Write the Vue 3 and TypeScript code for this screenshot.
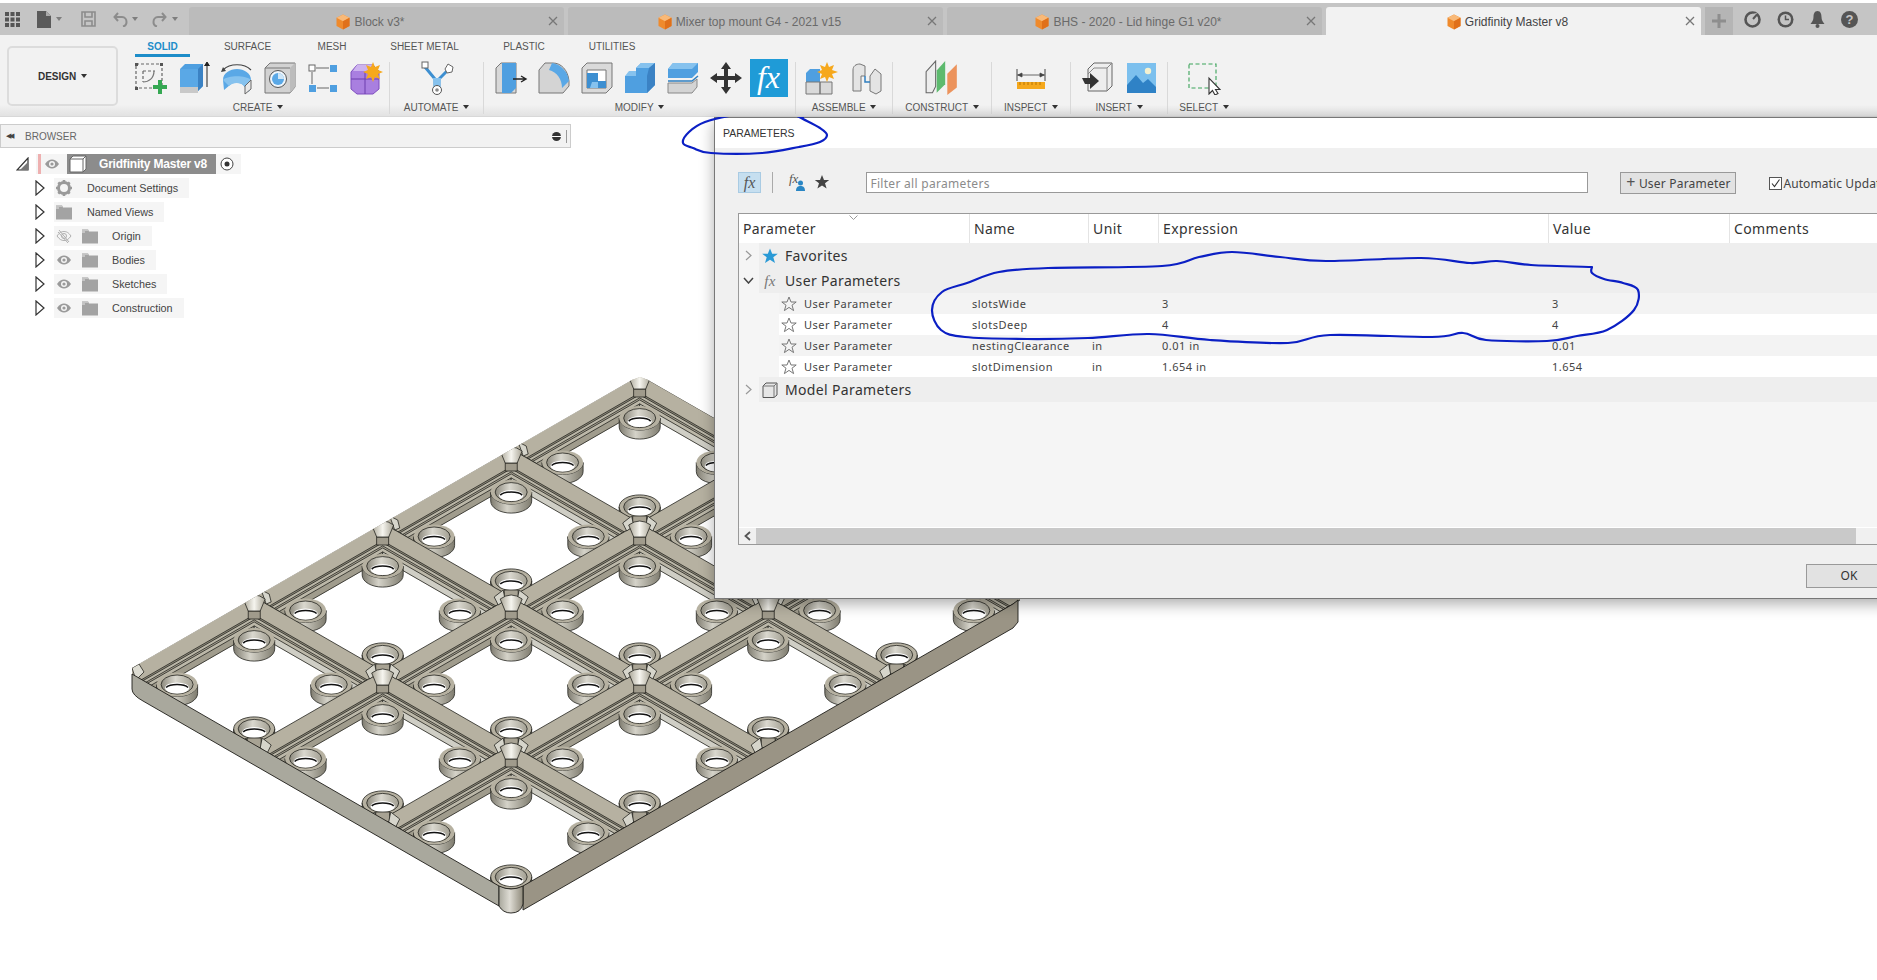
<script setup lang="ts">
import { computed } from "vue";

type Pt = [number, number];

// lattice of the baseplate on screen: 4 cells along u, 3 along v
const origin: Pt = [125.7, 671];
const u: Pt = [128.5, -74];
const v: Pt = [128.5, 74];

const at = (a: number, b: number, dy = 0): Pt => [
  origin[0] + a * u[0] + b * v[0],
  origin[1] + a * u[1] + b * v[1] + dy,
];
const pts = (list: Pt[]) => list.map((p) => `${p[0].toFixed(1)},${p[1].toFixed(1)}`).join(" ");

const bands = [
  { inset: 0.12, fill: "#8f8b7c" },
  { inset: 0.133, fill: "#bab6a7" },
  { inset: 0.155, fill: "#a8a394" },
  { inset: 0.168, fill: "#bcb8a9" },
];

const bossPath = (c: Pt) => {
  const [x, y] = c;
  return `M${x - 20.5},${y} A20.5 12 0 0 0 ${x + 20.5},${y} L${x + 20.5},${y + 9} A20.5 12 0 0 1 ${x - 20.5},${y + 9} Z`;
};
const holeArc = (c: Pt) => {
  const [x, y] = c;
  return `M${x - 11},${y + 3} A12 5 0 0 1 ${x + 11},${y + 3}`;
};

const cells = computed(() => {
  const list: { key: string; order: number; diamond: string; bands: { fill: string; points: string }[]; white: string; wallA: string; wallB: string; bosses: { c: Pt; side: string; arc: string; outline: boolean }[] }[] = [];
  for (let i = 0; i < 4; i++) {
    for (let j = 0; j < 3; j++) {
      const rim = (dy: number) => ({
        a: at(i, j + 0.195, dy),
        b: at(i + 0.805, j + 0.195, dy),
        c: at(i + 0.805, j + 1, dy),
        d: at(i, j + 1, dy),
      });
      const top = rim(0);
      const low = rim(7);
      const bosses = [
        [0.8, 0.2],
        [0.2, 0.2],
        [0.8, 0.8],
        [0.2, 0.8],
      ].map(([s, t], n) => {
        const c = at(i + s, j + t, 13.5);
        // only the boss standing in the opening shows its far outline
        return { c, side: bossPath(c), arc: holeArc(c), outline: n === 3 };
      });
      list.push({
        key: `${i}-${j}`,
        order: j - i,
        diamond: pts([at(i, j), at(i + 1, j), at(i + 1, j + 1), at(i, j + 1)]),
        bands: bands.map((b) => ({
          fill: b.fill,
          points: pts([at(i, j + b.inset), at(i + 1 - b.inset, j + b.inset), at(i + 1 - b.inset, j + 1), at(i, j + 1)]),
        })),
        white: pts([low.a, low.b, low.c, low.d]),
        wallA: pts([top.a, top.b, low.b, low.a]),
        wallB: pts([top.b, top.c, low.c, low.b]),
        bosses,
      });
    }
  }
  return list.sort((p, q) => p.order - q.order);
});

const cones = computed(() => {
  const list: { key: string; path: string; x: number; y: number }[] = [];
  for (let a = 1; a <= 4; a++) {
    for (let b = 0; b < 3; b++) {
      const [x, y] = at(a, b);
      list.push({
        key: `${a}-${b}`,
        path: `M${x - 11},${y + 2} Q${x},${y - 6} ${x + 11},${y + 2} L${x + 6},${y + 14} L${x - 6},${y + 14} Z`,
        x,
        y,
      });
    }
  }
  return list;
});

const chips = computed(() => {
  const list: { key: string; left: string; right: string; box: string }[] = [];
  for (let a = 0; a < 4; a++) {
    for (let b = 1; b <= 3; b++) {
      if (a === 0 && b === 3) continue;
      const [x, y] = at(a, b);
      list.push({
        key: `${a}-${b}`,
        left: pts([[x - 17, y], [x - 8, y - 7], [x - 6, y + 3], [x - 13, y + 8]]),
        right: pts([[x + 17, y], [x + 8, y - 7], [x + 6, y + 3], [x + 13, y + 8]]),
        box: pts([[x - 7, y - 7], [x + 7, y - 7], [x + 7, y + 3], [x - 7, y + 3]]),
      });
    }
  }
  return list;
});

const edgeChips = computed(() =>
  [1, 2, 3].map((a) => {
    const [x, y] = at(a, 0);
    return pts([[x + 7, y - 7], [x + 15, y - 3], [x + 17, y + 5], [x + 12, y + 7]]);
  }),
);

// pen strokes over the screenshot
const smooth = (p: Pt[]) => {
  let d = `M${p[0][0]},${p[0][1]}`;
  for (let i = 0; i < p.length - 1; i++) {
    const p0 = p[Math.max(i - 1, 0)];
    const p1 = p[i];
    const p2 = p[i + 1];
    const p3 = p[Math.min(i + 2, p.length - 1)];
    const c1: Pt = [p1[0] + (p2[0] - p0[0]) / 6, p1[1] + (p2[1] - p0[1]) / 6];
    const c2: Pt = [p2[0] - (p3[0] - p1[0]) / 6, p2[1] - (p3[1] - p1[1]) / 6];
    d += ` C${c1[0].toFixed(1)},${c1[1].toFixed(1)} ${c2[0].toFixed(1)},${c2[1].toFixed(1)} ${p2[0]},${p2[1]}`;
  }
  return d;
};

const titleLoop = smooth([
  [803, 117], [783, 113], [762, 112], [734, 115], [705, 122], [689, 132], [683, 143], [693, 148],
  [711, 153], [762, 153], [799, 147], [820, 142], [827, 135], [820, 128], [803, 119], [795, 115],
]);
const paramLoop = smooth([
  [1592, 267], [1531, 265], [1497, 261], [1470, 263], [1421, 258], [1326, 261], [1280, 257], [1232, 252],
  [1199, 257], [1162, 266], [1048, 268], [999, 272], [967, 283], [942, 292], [932, 310], [941, 330],
  [965, 337], [1027, 339], [1088, 338], [1149, 334], [1210, 340], [1288, 343], [1330, 335], [1432, 337],
  [1463, 333], [1486, 340], [1547, 341], [1577, 336], [1607, 330], [1634, 310], [1638, 290], [1623, 283],
  [1604, 279], [1592, 273], [1592, 267],
]);

const tabs = [
  { title: "Block v3*", active: false },
  { title: "Mixer top mount G4 - 2021 v15", active: false },
  { title: "BHS - 2020 - Lid hinge G1 v20*", active: false },
  { title: "Gridfinity Master v8", active: true },
];
const ribbonTabs = ["SOLID", "SURFACE", "MESH", "SHEET METAL", "PLASTIC", "UTILITIES"];

const treeRows = [
  { label: "Document Settings", icon: "gear", eye: "" },
  { label: "Named Views", icon: "folder", eye: "" },
  { label: "Origin", icon: "folder", eye: "off" },
  { label: "Bodies", icon: "folder", eye: "on" },
  { label: "Sketches", icon: "folder", eye: "on" },
  { label: "Construction", icon: "folder", eye: "on" },
];

const columns = ["Parameter", "Name", "Unit", "Expression", "Value", "Comments"];
const userParams = [
  { name: "slotsWide", unit: "", expr: "3", value: "3" },
  { name: "slotsDeep", unit: "", expr: "4", value: "4" },
  { name: "nestingClearance", unit: "in", expr: "0.01 in", value: "0.01" },
  { name: "slotDimension", unit: "in", expr: "1.654 in", value: "1.654" },
];
</script>

<template>
  <div class="app">
    <svg class="defs" width="0" height="0">
      <defs>
        <symbol id="cube" viewBox="0 0 14 16">
          <path d="M7 0.5 13.5 3.8V12L7 15.5 0.5 12V3.8Z" fill="#ef8a2c" />
          <path d="M7 0.5 13.5 3.8 7 7.2 0.5 3.8Z" fill="#f9b978" />
          <path d="M7 7.2 13.5 3.8V12L7 15.5Z" fill="#e0701a" />
        </symbol>
        <symbol id="eye" viewBox="0 0 16 16">
          <path d="M1 8C3.5 4.5 5.5 3.5 8 3.5S12.5 4.5 15 8C12.5 11.5 10.5 12.5 8 12.5S3.5 11.5 1 8Z" fill="#9a9a9a" />
          <circle cx="8" cy="8" r="3" fill="#f5f5f5" />
          <circle cx="8" cy="8" r="1.6" fill="#9a9a9a" />
        </symbol>
        <symbol id="folder" viewBox="0 0 16 16">
          <path d="M0 1.5H6L7 3.5H16V15.5H0Z" fill="#a3a3a3" />
          <path d="M0 1.5H6L7 3H3V5H0Z" fill="#c4c4c4" />
        </symbol>
        <symbol id="toggle" viewBox="0 0 10 16">
          <path d="M1 1 9 8 1 15Z" fill="none" stroke="#333" stroke-width="1.2" />
        </symbol>
        <symbol id="star" viewBox="0 0 16 16">
          <path d="M8 1 10 6H15.2L11 9.2 12.6 14.6 8 11.4 3.4 14.6 5 9.2 0.8 6H6Z" fill="none" stroke="#777" stroke-width="1" />
        </symbol>
      </defs>
    </svg>

    <header class="titlebar">
      <div class="quick">
        <svg class="apps" width="15" height="15" viewBox="0 0 15 15" fill="#555">
          <rect x="0" y="0" width="4" height="4" /><rect x="5.5" y="0" width="4" height="4" /><rect x="11" y="0" width="4" height="4" />
          <rect x="0" y="5.5" width="4" height="4" /><rect x="5.5" y="5.5" width="4" height="4" /><rect x="11" y="5.5" width="4" height="4" />
          <rect x="0" y="11" width="4" height="4" /><rect x="5.5" y="11" width="4" height="4" /><rect x="11" y="11" width="4" height="4" />
        </svg>
        <svg class="file" width="14" height="17" viewBox="0 0 14 17"><path d="M0 0H9L14 5V17H0Z" fill="#5a5a5a" /><path d="M9 0 14 5H9Z" fill="#aaa" /></svg>
        <span class="caret file-caret"></span>
        <svg class="save" width="15" height="16" viewBox="0 0 15 16" fill="none" stroke="#8c8c8c" stroke-width="1.6"><path d="M1 1H14V15H1Z" /><path d="M4 1V6H11V1M4 15V10H11V15" /></svg>
        <svg class="undo" width="15" height="15" viewBox="0 0 15 15" fill="none" stroke="#8c8c8c" stroke-width="2"><path d="M5 1 1.5 5 5 9M2 5H9C12 5 13.5 7.5 13.5 10S12 14 10 14.5" /></svg>
        <span class="caret undo-caret"></span>
        <svg class="redo" width="15" height="15" viewBox="0 0 15 15" fill="none" stroke="#8c8c8c" stroke-width="2"><path d="M10 1 13.5 5 10 9M13 5H6C3 5 1.5 7.5 1.5 10S3 14 5 14.5" /></svg>
        <span class="caret redo-caret"></span>
      </div>
      <div class="doc-tabs">
        <div v-for="tab in tabs" :key="tab.title" class="doc-tab" :class="{ active: tab.active }">
          <span class="doc-title">
            <svg width="14" height="16"><use href="#cube" /></svg>
            {{ tab.title }}
          </span>
          <svg class="doc-close" width="10" height="10" viewBox="0 0 10 10" stroke-width="1.3"><path d="M1 1 9 9M9 1 1 9" /></svg>
        </div>
        <div class="doc-add">
          <svg width="14" height="14" viewBox="0 0 14 14" fill="#8e8e8e"><rect x="5.5" y="0" width="3" height="14" /><rect x="0" y="5.5" width="14" height="3" /></svg>
        </div>
      </div>
      <div class="status-icons">
        <svg width="17" height="17" viewBox="0 0 17 17"><circle cx="8.5" cy="8.5" r="7" fill="none" stroke="#555" stroke-width="2.6" /><path d="M8 3 13 2 10 8Z" fill="#c4c4c4" /><path d="M9 8 13 3.5" stroke="#555" stroke-width="2" /></svg>
        <svg width="17" height="17" viewBox="0 0 17 17"><circle cx="8.5" cy="8.5" r="8" fill="#555" /><circle cx="8.5" cy="8.5" r="5.5" fill="#c4c4c4" /><path d="M8.5 4.5V8.5H12" fill="none" stroke="#555" stroke-width="1.5" /></svg>
        <svg width="15" height="17" viewBox="0 0 15 17" fill="#555"><path d="M7.5 0C10.5 0 11.5 3 11.5 6 11.5 9.5 13 11 14.5 13H.5C2 11 3.5 9.5 3.5 6 3.5 3 4.5 0 7.5 0Z" /><circle cx="7.5" cy="15" r="2" /></svg>
        <span class="help">?</span>
      </div>
    </header>

    <section class="ribbon">
      <button class="design-btn">DESIGN <span class="caret dark"></span></button>
      <div class="ribbon-main">
        <nav class="ribbon-tabs">
          <span v-for="(name, i) in ribbonTabs" :key="name" class="ribbon-tab" :class="{ current: i === 0 }">{{ name }}</span>
        </nav>
        <div class="groups">
          <div class="group g-create">
            <div class="tools">
              <svg class="tool" viewBox="0 0 34 34">
                <path d="M2 3H28V27H2Z M9 10H21M9 10V21" fill="none" stroke="#666" stroke-width="1.2" stroke-dasharray="3 2" />
                <path d="M20 10C20 17 15 21 9 21" fill="none" stroke="#777" stroke-width="1.2" />
                <rect x="1" y="2" width="3" height="3" fill="#555" /><rect x="26" y="2" width="3" height="3" fill="#555" /><rect x="1" y="26" width="3" height="3" fill="#555" />
                <path d="M24 19H28V24H33V28H28V33H24V28H19V24H24Z" fill="#35a853" />
              </svg>
              <svg class="tool" viewBox="0 0 34 34">
                <path d="M3 8 8 3H26V25L21 30H3Z" fill="#4f9fe0" />
                <path d="M3 8H21V30H3Z" fill="#5aa8e6" />
                <path d="M21 8 26 3V25L21 30Z" fill="#3b82c4" />
                <path d="M3 26H21V32H3Z" fill="#c9c9c9" />
                <path d="M30 26V2M27.5 5 30 1 32.5 5" fill="#222" stroke="#222" stroke-width="1" />
              </svg>
              <svg class="tool" viewBox="0 0 34 34">
                <path d="M3 19C3 12 10 8 17 8S31 12 31 19L29 31 23 24C20 21 13 21 10 24L4 29Z" fill="#5aa8e6" />
                <path d="M3 19C8 14 26 14 31 19L25 25C20 21 13 21 9 25Z" fill="#86c2ee" />
                <path d="M25 25 31 19V28L25 33Z" fill="#e8e8e8" stroke="#666" />
                <path d="M3 9C10 2 24 2 31 9" fill="none" stroke="#444" stroke-width="1.2" />
                <path d="M1 11 3 6 6 10Z" fill="#444" />
              </svg>
              <svg class="tool" viewBox="0 0 34 34">
                <path d="M2 7 7 2H32V26L27 32H2Z" fill="#d2d2d2" stroke="#777" />
                <path d="M27 7 32 2V26L27 32Z" fill="#bcbcbc" />
                <path d="M2 7H27" stroke="#777" />
                <circle cx="15" cy="18" r="8.5" fill="#eef5fb" stroke="#555" />
                <circle cx="15" cy="18" r="6" fill="#5aa8e6" />
                <path d="M15 18V12A6 6 0 0 1 21 18Z" fill="#cfe6f7" />
              </svg>
              <svg class="tool" viewBox="0 0 34 34">
                <rect x="3" y="4" width="6" height="6" fill="#fff" stroke="#666" />
                <rect x="24" y="4" width="7" height="7" fill="#4f9fe0" />
                <rect x="3" y="24" width="7" height="7" fill="#4f9fe0" />
                <rect x="24" y="24" width="7" height="7" fill="#4f9fe0" />
                <path d="M10 7H23M6 11V23M11 27H23" stroke="#666" />
              </svg>
              <svg class="tool" viewBox="0 0 34 34">
                <path d="M2 11 8 4H24L30 10V28L24 33H8L2 28Z" fill="#a97fe0" stroke="#7f4fbf" />
                <path d="M2 18H30M16 11V33" stroke="#6d3fae" />
                <path d="M8 4H24L18 10H4Z" fill="#cdb3ef" />
                <path d="M24 1 26 6 31 4 29 9 34 11 29 13 31 18 26 16 24 21 22 16 17 18 19 13 14 11 19 9 17 4 22 6Z" fill="#f6a81c" />
              </svg>
            </div>
            <div class="group-label">CREATE <span class="caret dark"></span></div>
          </div>

          <div class="group g-automate">
            <div class="tools">
              <svg class="tool" viewBox="0 0 34 34">
                <path d="M5 6 15 18 15 27M29 8 19 18 19 27" fill="none" stroke="#3d8fd1" stroke-width="3" />
                <path d="M13 17H21L20 27H14Z" fill="#86c2ee" />
                <rect x="2" y="1" width="6" height="6" fill="#fff" stroke="#666" />
                <path d="M28 3 33 6 32 11 27 12 25 8Z" fill="#fff" stroke="#666" />
                <circle cx="17" cy="29" r="4.5" fill="#fff" stroke="#555" />
                <circle cx="17" cy="29" r="1.8" fill="#888" />
              </svg>
            </div>
            <div class="group-label">AUTOMATE <span class="caret dark"></span></div>
          </div>

          <div class="group g-modify">
            <div class="tools">
              <svg class="tool" viewBox="0 0 34 34">
                <path d="M2 7 7 2H22V32H2Z" fill="#d8d8d8" stroke="#777" />
                <path d="M8 2H22V27L17 32H8Z" fill="#4f9fe0" />
                <path d="M19 18H31M27 15 32 18 27 21" fill="none" stroke="#222" stroke-width="1.4" />
              </svg>
              <svg class="tool" viewBox="0 0 34 34">
                <path d="M2 32V9L8 2H16C24 2 31 9 32 20V25L26 32Z" fill="#d4d4d4" stroke="#777" />
                <path d="M15 2C23 3 31 10 32 20L25 27C25 18 20 11 12 9Z" fill="#5aa8e6" />
              </svg>
              <svg class="tool" viewBox="0 0 34 34">
                <path d="M2 7 7 2H32V26L26 32H2Z" fill="#dadada" stroke="#777" />
                <path d="M7 9H26V27H7Z" fill="#fff" stroke="#777" />
                <path d="M7 12H18V20H26V27H7Z" fill="#3d8fd1" />
                <path d="M12 21 18 21 18 27H10Z" fill="#86c2ee" />
              </svg>
              <svg class="tool" viewBox="0 0 34 34">
                <path d="M2 15H13V7L18 2H32V24L24 32H2Z" fill="#4f9fe0" />
                <path d="M13 7H26L32 2H18Z" fill="#86c2ee" />
                <path d="M26 7 32 2V24L24 32V15Z" fill="#3b82c4" />
                <path d="M2 15 6 10H13V15Z" fill="#86c2ee" />
              </svg>
              <svg class="tool" viewBox="0 0 34 34">
                <path d="M2 8 7 2H32V11L26 17H2Z" fill="#4f9fe0" />
                <path d="M2 8 7 2H32L26 8Z" fill="#86c2ee" />
                <path d="M2 20H26L32 15" stroke="#2f7fc0" stroke-width="1.5" fill="none" />
                <path d="M2 22H26L31 18V26L26 32H2Z" fill="#d4d4d4" stroke="#888" />
              </svg>
              <svg class="tool" viewBox="0 0 34 34" fill="#333">
                <path d="M17 1 22 8H19V15H26V12L33 17 26 22V19H19V26H22L17 33 12 26H15V19H8V22L1 17 8 12V15H15V8H12Z" />
              </svg>
              <div class="fx-tile">fx</div>
            </div>
            <div class="group-label">MODIFY <span class="caret dark"></span></div>
          </div>

          <div class="group g-assemble">
            <div class="tools wide">
              <svg class="tool" viewBox="0 0 34 34">
                <path d="M1 12 5 8H15V21H1Z" fill="#4f9fe0" />
                <path d="M1 21H15V33H1ZM15 21H27V33H15Z" fill="#dadada" stroke="#777" />
                <path d="M22 1 24 6 29 4 27 9 33 11 27 13 29 18 24 16 22 21 20 16 15 18 17 13 12 11 17 9 15 4 20 6Z" fill="#f6a81c" />
              </svg>
              <svg class="tool" viewBox="0 0 34 34">
                <path d="M3 30V9C3 5 6 3 10 3L15 5V15H11V30Z" fill="#e4e4e4" stroke="#777" />
                <path d="M20 30V15L25 8 31 13V30L26 33Z" fill="#e4e4e4" stroke="#777" />
                <path d="M15 15V21H20" fill="none" stroke="#2f7fc0" stroke-width="1.5" />
              </svg>
            </div>
            <div class="group-label">ASSEMBLE <span class="caret dark"></span></div>
          </div>

          <div class="group g-construct">
            <div class="tools">
              <svg class="tool large" viewBox="0 0 34 34">
                <path d="M2 31V11L11 1V25L8 31Z" fill="#ededed" stroke="#666" />
                <path d="M12 31V10L20 1V23Z" fill="#5dba6e" />
                <path d="M22 33V13L31 4V26Z" fill="#ec935c" />
              </svg>
            </div>
            <div class="group-label">CONSTRUCT <span class="caret dark"></span></div>
          </div>

          <div class="group g-inspect">
            <div class="tools">
              <svg class="tool" viewBox="0 0 34 34">
                <path d="M3 8V20M31 8V20" stroke="#444" />
                <path d="M3 14H31M4 14 8 12V16ZM30 14 26 12V16Z" fill="#444" stroke="#444" stroke-width=".8" />
                <rect x="3" y="21" width="28" height="7" fill="#f5a81c" />
                <path d="M6 21V24M10 21V24M14 21V24M18 21V24M22 21V24M26 21V24" stroke="#b87400" />
              </svg>
            </div>
            <div class="group-label">INSPECT <span class="caret dark"></span></div>
          </div>

          <div class="group g-insert">
            <div class="tools">
              <svg class="tool" viewBox="0 0 34 34">
                <path d="M7 8 13 2H31V25L26 30H7Z" fill="#eee" stroke="#666" />
                <path d="M26 7H13L7 13M26 7 31 2M26 7V30" fill="none" stroke="#888" />
                <path d="M1 17H9V12L18 20 9 28V23H4Z" fill="#333" />
              </svg>
              <svg class="tool" viewBox="0 0 34 34">
                <rect x="3" y="2" width="29" height="30" fill="#7cc0ee" />
                <circle cx="24" cy="10" r="3.2" fill="#f4f1d0" />
                <path d="M3 32V24L12 14 19 22 24 18 32 26V32Z" fill="#2f82c6" />
              </svg>
            </div>
            <div class="group-label">INSERT <span class="caret dark"></span></div>
          </div>

          <div class="group g-select">
            <div class="tools">
              <svg class="tool" viewBox="0 0 34 34">
                <rect x="2" y="3" width="27" height="24" fill="none" stroke="#3aa35a" stroke-width="1.1" stroke-dasharray="4 2.5" />
                <path d="M22 17V33L25.5 29.5 28 34 31 32.5 28.5 28.5H33Z" fill="#fff" stroke="#333" stroke-width="1.1" />
              </svg>
            </div>
            <div class="group-label">SELECT <span class="caret dark"></span></div>
          </div>
        </div>
      </div>
    </section>

    <main class="workspace">
      <!-- the model sits on a free canvas, page coordinates -->
      <svg class="model" viewBox="0 117 1877 863" width="1877" height="863">
        <defs>
          <linearGradient id="bossSide" x1="0" x2="1" y1="0" y2="0">
            <stop offset="0" stop-color="#7f7c70" />
            <stop offset=".4" stop-color="#d5d3c9" />
            <stop offset="1" stop-color="#7f7c6f" />
          </linearGradient>
          <linearGradient id="cone" x1="0" x2="1" y1="0" y2="0">
            <stop offset="0" stop-color="#a9a596" />
            <stop offset=".5" stop-color="#f6f5ef" />
            <stop offset="1" stop-color="#a9a596" />
          </linearGradient>
          <linearGradient id="corner" x1="0" x2="1" y1="0" y2="0">
            <stop offset="0" stop-color="#a8a79c" />
            <stop offset=".45" stop-color="#dedcd4" />
            <stop offset="1" stop-color="#8f8a7b" />
          </linearGradient>
          <linearGradient id="bore" x1="0" x2="1" y1="0" y2="0">
            <stop offset="0" stop-color="#8d8a7e" />
            <stop offset=".45" stop-color="#dad8cf" />
            <stop offset="1" stop-color="#a3a093" />
          </linearGradient>
          <clipPath id="plateClip">
            <polygon points="132,668 632,380 640,377 648,380 1020,593 1020,630 525,916 500,916 132,700" />
          </clipPath>
        </defs>
        <g clip-path="url(#plateClip)" stroke="#25241f" stroke-width=".8">
          <g v-for="cell in cells" :key="cell.key">
            <polygon :points="cell.diamond" fill="#b6b1a1" />
            <polygon v-for="b in cell.bands" :key="b.fill" :points="b.points" :fill="b.fill" />
            <polygon :points="cell.white" fill="#fff" stroke="none" />
            <polygon :points="cell.wallA" fill="#a09c8d" />
            <polygon :points="cell.wallB" fill="#cfcec5" />
            <g v-for="(boss, n) in cell.bosses" :key="n">
              <path :d="boss.side" fill="url(#bossSide)" />
              <ellipse :cx="boss.c[0]" :cy="boss.c[1]" rx="20.5" ry="12" fill="#b6b1a1" :stroke="boss.outline ? '#25241f' : 'none'" />
              <ellipse :cx="boss.c[0]" :cy="boss.c[1]" rx="16" ry="9.5" fill="url(#bore)" />
              <ellipse :cx="boss.c[0]" :cy="boss.c[1] + 3.5" rx="12" ry="5.5" fill="#fff" stroke="none" />
              <path :d="boss.arc" fill="none" stroke="#111" stroke-width="1.5" />
            </g>
          </g>
          <polygon v-for="(p, n) in edgeChips" :key="n" :points="p" fill="#d6d5cb" />
          <g v-for="c in chips" :key="c.key">
            <polygon :points="c.box" fill="#a8a394" />
            <polygon :points="c.left" fill="#d6d5cb" />
            <polygon :points="c.right" fill="#d6d5cb" />
          </g>
          <g v-for="c in cones" :key="c.key">
            <rect :x="c.x - 6" :y="c.y + 14" width="12" height="8" fill="#a09b8c" />
            <path :d="c.path" fill="url(#cone)" />
          </g>
          <path d="M132,668 L139,664 L144,672 L136,680 Z" fill="#dcdbd1" />
        </g>
        <g stroke="#1e1d19" stroke-width=".9">
          <path d="M132,674 L499,886 V906 L143,701 Q132,695 132,689 Z" fill="#a9a89d" />
          <path d="M523,886 L1013,604 L1018,600 V622 L1013,628 L523,910 Z" fill="#9a9485" />
          <path d="M499,886 Q511,892 523,886 V904 Q521,913 511,913 Q503,913 499,906 Z" fill="url(#corner)" />
        </g>
      </svg>

      <aside class="browser">
        <div class="browser-bar">
          <span class="collapse">◀◀</span>
          <span class="browser-title">BROWSER</span>
          <span class="browser-tools"><i class="minus"></i><i class="grip"></i></span>
        </div>
        <div class="tree-root">
          <svg class="root-toggle" width="13" height="14" viewBox="0 0 13 14"><path d="M12 1V13H1Z" fill="none" stroke="#333" stroke-width="1.2" /><path d="M12 5V13H4Z" fill="#777" /></svg>
          <div class="root-item">
            <i class="red-mark"></i>
            <svg class="eye" width="16" height="16"><use href="#eye" /></svg>
            <div class="root-name">
              <svg width="18" height="18" viewBox="0 0 18 18"><path d="M1 4 4 1H17V14L14 17H1Z" fill="#fff" stroke="#666" /><path d="M14 4H1M14 4 17 1M14 4V17" fill="none" stroke="#666" /></svg>
              <span>Gridfinity Master v8</span>
            </div>
            <svg class="radio" width="14" height="14" viewBox="0 0 14 14"><circle cx="7" cy="7" r="6" fill="#fff" stroke="#444" /><circle cx="7" cy="7" r="2.5" fill="#333" /></svg>
          </div>
        </div>
        <div v-for="row in treeRows" :key="row.label" class="tree-row">
          <svg class="tree-toggle" width="10" height="16"><use href="#toggle" /></svg>
          <div class="tree-item">
            <template v-if="row.eye">
              <svg v-if="row.eye === 'on'" class="eye" width="16" height="16"><use href="#eye" /></svg>
              <svg v-else class="eye" width="16" height="16" viewBox="0 0 16 16" fill="none" stroke="#b0b0b0"><path d="M1 8C3.5 4.5 5.5 3.5 8 3.5S12.5 4.5 15 8C12.5 11.5 10.5 12.5 8 12.5S3.5 11.5 1 8Z" /><circle cx="8" cy="8" r="2.5" /><path d="M3 2 13 14M2 4 12 15" /></svg>
            </template>
            <svg v-if="row.icon === 'gear'" class="node-icon" width="16" height="16" viewBox="0 0 16 16">
              <circle cx="8" cy="8" r="5.5" fill="none" stroke="#9a9a9a" stroke-width="3" />
              <path d="M8 0V3M8 13V16M0 8H3M13 8H16M2.3 2.3 4.4 4.4M11.6 11.6 13.7 13.7M13.7 2.3 11.6 4.4M4.4 11.6 2.3 13.7" stroke="#9a9a9a" stroke-width="2.6" />
            </svg>
            <svg v-else class="node-icon" :class="{ shifted: row.eye }" width="16" height="16"><use href="#folder" /></svg>
            <span class="node-label" :class="{ shifted: row.eye }">{{ row.label }}</span>
          </div>
        </div>
      </aside>

      <section class="dialog">
        <div class="dialog-title">PARAMETERS</div>
        <div class="dialog-toolbar">
          <div class="fx-toggle">fx</div>
          <i class="tool-sep"></i>
          <span class="fx-user">
            <i class="fx-small">fx</i>
            <svg width="9" height="11" viewBox="0 0 9 11" fill="#2a86c4"><circle cx="4.5" cy="3" r="2.5" /><path d="M0 11C0 7 2 6 4.5 6S9 7 9 11Z" /></svg>
          </span>
          <svg class="star-filter" width="16" height="16" viewBox="0 0 16 16" fill="#444"><path d="M8 1 10 6H15.2L11 9.2 12.6 14.6 8 11.4 3.4 14.6 5 9.2 0.8 6H6Z" /></svg>
          <input class="filter" type="text" placeholder="Filter all parameters" />
          <button class="add-param"><span class="plus">+</span> User Parameter</button>
          <label class="auto-update">
            <svg width="13" height="13" viewBox="0 0 13 13"><rect x=".5" y=".5" width="12" height="12" fill="#fff" stroke="#555" /><path d="M3 6.5 5.5 9.5 10.5 2.5" fill="none" stroke="#333" stroke-width="1.1" /></svg>
            <span>Automatic Update</span>
          </label>
        </div>

        <div class="table">
          <div class="table-head">
            <span v-for="name in columns" :key="name" class="head-cell">{{ name }}</span>
            <svg class="sort-mark" width="9" height="5" viewBox="0 0 9 5"><path d="M.5 .5 4.5 4.5 8.5 .5" fill="none" stroke="#999" /></svg>
          </div>
          <div class="table-body">
            <div class="group-row">
              <span class="chevron"><svg width="7" height="11" viewBox="0 0 7 11"><path d="M1 1 6 5.5 1 10" fill="none" stroke="#999" stroke-width="1.2" /></svg></span>
              <svg class="group-icon" width="16" height="16" viewBox="0 0 16 16" fill="#2a9ad6"><path d="M8 .5 10.2 5.8H15.8L11.3 9.3 13 15 8 11.7 3 15 4.7 9.3 .2 5.8H5.8Z" /></svg>
              <span class="group-name">Favorites</span>
            </div>
            <div class="group-row">
              <span class="chevron"><svg width="11" height="7" viewBox="0 0 11 7"><path d="M1 1 5.5 6 10 1" fill="none" stroke="#444" stroke-width="1.5" /></svg></span>
              <i class="group-icon fx-serif">fx</i>
              <span class="group-name">User Parameters</span>
            </div>
            <div v-for="param in userParams" :key="param.name" class="param-row">
              <span class="param-kind"><svg width="16" height="16"><use href="#star" /></svg>User Parameter</span>
              <span class="param-name">{{ param.name }}</span>
              <span class="param-cell">{{ param.unit }}</span>
              <span class="param-cell">{{ param.expr }}</span>
              <span class="param-cell">{{ param.value }}</span>
              <span></span>
            </div>
            <div class="group-row">
              <span class="chevron"><svg width="7" height="11" viewBox="0 0 7 11"><path d="M1 1 6 5.5 1 10" fill="none" stroke="#999" stroke-width="1.2" /></svg></span>
              <svg class="group-icon" width="16" height="16" viewBox="0 0 16 16"><path d="M1 4 4 1H15V13L12 15.5H1Z" fill="#e6e6e6" stroke="#555" /><path d="M12 4H1M12 4 15 1M12 4V15.5" fill="none" stroke="#777" /></svg>
              <span class="group-name">Model Parameters</span>
            </div>
          </div>
          <div class="scrollbar">
            <span class="scroll-arrow"><svg width="7" height="10" viewBox="0 0 7 10"><path d="M6 1 1.5 5 6 9" fill="none" stroke="#555" stroke-width="1.8" /></svg></span>
            <span class="scroll-thumb"></span>
          </div>
        </div>

        <div class="dialog-footer">
          <button class="ok-btn">OK</button>
        </div>
      </section>

      <!-- pen marks drawn over the dialog -->
      <svg class="pen" viewBox="0 117 1877 863" width="1877" height="863">
        <path :d="titleLoop" />
        <path :d="paramLoop" />
      </svg>
    </main>
  </div>
</template>

<style scoped>
.app {
  position: relative;
  width: 1877px;
  height: 980px;
  overflow: hidden;
  background: #fff;
  font-family: "Liberation Sans", Arial, sans-serif;
  display: flex;
  flex-direction: column;
}

.defs {
  position: absolute;
}

/* title bar */
.titlebar {
  height: 32px;
  margin-top: 3px;
  background: #c5c5c5;
  display: flex;
  flex: none;
}

.quick {
  width: 189px;
  flex: none;
  display: flex;
  align-items: center;
  padding-left: 5px;
  box-sizing: border-box;
}

.file {
  margin-left: 17px;
}

.file-caret {
  margin-left: 5px;
}

.save {
  margin-left: 19px;
}

.undo {
  margin-left: 17px;
}

.undo-caret {
  margin-left: 4px;
}

.redo {
  margin-left: 14px;
}

.redo-caret {
  margin-left: 5px;
}

.caret {
  display: inline-block;
  width: 0;
  height: 0;
  border-left: 3.5px solid transparent;
  border-right: 3.5px solid transparent;
  border-top: 4px solid #7e7e7e;
}

.caret.dark {
  border-left-width: 3px;
  border-right-width: 3px;
  border-top: 4px solid #333;
  margin-left: 2px;
  vertical-align: 2px;
}

.doc-tabs {
  display: flex;
  gap: 4px;
  padding-top: 4px;
}

.doc-tab {
  position: relative;
  width: 375px;
  height: 28px;
  padding: 2px 12px 0 0;
  background: #bbb;
  border-radius: 3px 3px 0 0;
  box-sizing: border-box;
  display: flex;
  align-items: center;
  justify-content: center;
  color: #6a6a6a;
  font-size: 12px;
}

.doc-tab.active {
  background: #f2f2f2;
  color: #444;
}

.doc-title {
  display: flex;
  align-items: center;
  gap: 4px;
}

.doc-close {
  position: absolute;
  right: 6px;
  top: 9px;
  stroke: #777;
}

.doc-add {
  width: 28px;
  height: 28px;
  background: #b5b5b5;
  display: flex;
  align-items: center;
  justify-content: center;
}

.status-icons {
  display: flex;
  align-items: center;
  gap: 16px;
  margin-left: 11px;
}

.help {
  width: 17px;
  height: 17px;
  border-radius: 50%;
  background: #555;
  color: #c5c5c5;
  font-size: 13px;
  font-weight: 700;
  line-height: 17px;
  text-align: center;
}

/* ribbon */
.ribbon {
  height: 82px;
  flex: none;
  display: flex;
  background: linear-gradient(#f2f2f2 86%, #e2e2e2 100%);
  border-bottom: 1px solid #d8d8d8;
  box-sizing: border-box;
}

.design-btn {
  width: 111px;
  height: 60px;
  margin: 11px 0 0 7px;
  padding: 0;
  background: #f2f2f2;
  border: 2px solid #dcdcdc;
  border-radius: 5px;
  color: #333;
  font: 700 10px "Liberation Sans", Arial, sans-serif;
  flex: none;
}

.ribbon-main {
  margin-left: 9px;
}

.ribbon-tabs {
  display: grid;
  grid-template-columns: 55px 115px 54px 131px 68px 108px;
  margin-left: 8px;
  height: 25px;
  padding-top: 6px;
  box-sizing: border-box;
}

.ribbon-tab {
  height: 17px;
  text-align: center;
  font-size: 10px;
  line-height: 12px;
  color: #555;
  white-space: nowrap;
}

.ribbon-tab.current {
  color: #1d8dc9;
  font-weight: 700;
  border-bottom: 3px solid #1d8dc9;
  box-sizing: content-box;
  height: 13px;
}

.groups {
  display: flex;
  height: 52px;
  margin-top: 2px;
}

.group {
  border-right: 1px solid #d9d9d9;
  box-sizing: border-box;
  display: flex;
  flex-direction: column;
  align-items: center;
}

.g-create {
  width: 263px;
}

.g-automate {
  width: 94px;
}

.g-modify {
  width: 312px;
}

.g-assemble {
  width: 97px;
}

.g-construct {
  width: 99px;
}

.g-inspect {
  width: 79px;
}

.g-insert {
  width: 97px;
}

.g-select {
  width: 72px;
  border-right: 0;
}

.tools {
  display: flex;
  flex: none;
  height: 38px;
  align-items: center;
  gap: 9px;
  margin-top: -3px;
}

.tools.wide {
  gap: 11px;
}

.tool {
  width: 34px;
  height: 34px;
  flex: none;
}

.tool.large {
  width: 36px;
  height: 36px;
}

.fx-tile {
  width: 38px;
  height: 38px;
  margin-left: -2px;
  margin-right: -2px;
  background: #1f9bd7;
  color: #fff;
  font: italic 32px/36px "Liberation Serif", serif;
  text-align: center;
}

.group-label {
  margin-top: 4px;
  font-size: 10px;
  line-height: 13px;
  color: #555;
  white-space: nowrap;
}

/* workspace */
.workspace {
  position: relative;
  flex: 1;
}

.model,
.pen {
  position: absolute;
  left: 0;
  top: 0;
}

.pen {
  pointer-events: none;
}

.pen path {
  fill: none;
  stroke: #0b1fc4;
  stroke-width: 2.2;
  stroke-linecap: round;
}

/* browser panel */
.browser {
  position: relative;
  width: 571px;
  padding-top: 7px;
}

.browser-bar {
  height: 24px;
  background: #f2f2f2;
  border: 1px solid #ccc;
  box-sizing: border-box;
  display: flex;
  align-items: center;
  font-size: 10px;
  color: #666;
}

.collapse {
  font-size: 7px;
  letter-spacing: -2px;
  color: #444;
  margin-left: 5px;
  width: 19px;
}

.browser-title {
  flex: 1;
}

.browser-tools {
  display: flex;
  align-items: center;
  gap: 5px;
  margin-right: 1px;
}

.minus {
  width: 9px;
  height: 9px;
  border-radius: 50%;
  background: linear-gradient(#333 40%, #fff 40%, #fff 60%, #333 60%);
}

.grip {
  width: 2px;
  height: 13px;
  border-left: 1px solid #999;
}

.tree-root {
  display: flex;
  align-items: center;
  height: 20px;
  margin: 6px 0 2px;
  padding-left: 16px;
}

.root-toggle {
  margin-right: 7px;
  flex: none;
}

.root-item {
  width: 205px;
  height: 20px;
  background: #f5f5f5;
  display: flex;
  align-items: center;
}

.red-mark {
  width: 3px;
  height: 20px;
  margin-left: 2px;
  background: #eeb0b0;
}

.eye {
  flex: none;
}

.root-item .eye {
  margin-left: 3px;
}

.root-name {
  width: 149px;
  height: 20px;
  margin-left: 7px;
  background: #8c8c8c;
  color: #fff;
  font-size: 12px;
  display: flex;
  align-items: center;
}

.root-name svg {
  margin-left: 2px;
  flex: none;
}

.root-name span {
  margin-left: 12px;
  font-weight: 600;
  letter-spacing: -.2px;
}

.radio {
  margin-left: 4px;
}

.tree-row {
  display: flex;
  align-items: center;
  height: 24px;
  padding-left: 35px;
}

.tree-toggle {
  flex: none;
  margin-right: 9px;
}

.tree-item {
  height: 20px;
  padding: 0 11px 0 2px;
  background: #f5f5f5;
  display: flex;
  align-items: center;
  font-size: 10.8px;
  color: #444;
}

.node-icon {
  flex: none;
}

.node-icon.shifted {
  margin-left: 10px;
}

.node-label {
  margin-left: 15px;
}

.node-label.shifted {
  margin-left: 14px;
}

/* parameters dialog */
.dialog {
  position: absolute;
  left: 714px;
  top: 0;
  width: 1200px;
  height: 482px;
  background: #f0f0f0;
  border: 1px solid #777;
  box-sizing: border-box;
  box-shadow: 0 5px 14px rgba(0, 0, 0, .32);
  font-family: "Noto Sans", "Open Sans", sans-serif;
  color: #333;
  display: flex;
  flex-direction: column;
}

.dialog-title {
  height: 30px;
  background: #fff;
  padding-left: 8px;
  font: 10.5px/30px "Liberation Sans", Arial, sans-serif;
  color: #333;
}

.dialog-toolbar {
  height: 65px;
  padding: 24px 0 0 23px;
  box-sizing: border-box;
  display: flex;
  align-items: flex-start;
}

.fx-toggle {
  width: 23px;
  height: 21px;
  background: #c6dff0;
  border: 1px solid #a9cbe3;
  box-sizing: border-box;
  color: #555;
  font: italic 16px/19px "Liberation Serif", serif;
  text-align: center;
}

.tool-sep {
  width: 1px;
  height: 21px;
  margin-left: 11px;
  background: #aaa;
}

.fx-user {
  margin-left: 16px;
  display: flex;
  align-items: flex-end;
  height: 19px;
}

.fx-small {
  font: italic 13px/14px "Liberation Serif", serif;
  color: #555;
  align-self: flex-start;
  margin-right: -2px;
}

.star-filter {
  margin-left: 9px;
  margin-top: 2px;
}

.filter {
  width: 722px;
  height: 21px;
  margin-left: 36px;
  padding: 2px 3px 0;
  background: #fff;
  border: 1px solid #999;
  box-sizing: border-box;
  font: 12px "Noto Sans", sans-serif;
  letter-spacing: .3px;
  outline: none;
}

.filter::placeholder {
  color: #8b8b8b;
  opacity: 1;
}

.add-param {
  width: 116px;
  height: 22px;
  margin-left: 32px;
  padding: 0;
  background: #e2e2e2;
  border: 1px solid #999;
  color: #444;
  font: 12px "Noto Sans", sans-serif;
  letter-spacing: .2px;
}

.plus {
  font-size: 16px;
  line-height: 12px;
  color: #555;
}

.auto-update {
  margin-left: 33px;
  height: 22px;
  display: flex;
  align-items: center;
  gap: 1px;
  font-size: 12px;
  letter-spacing: .1px;
  color: #444;
  white-space: nowrap;
}

.table {
  margin-left: 23px;
  height: 332px;
  background: #f5f5f5;
  border: 1px solid #999;
  border-right: 0;
  box-sizing: border-box;
  display: flex;
  flex-direction: column;
}

.table-head {
  position: relative;
  height: 29px;
  flex: none;
  background: #fff;
  display: grid;
  grid-template-columns: 230px 119px 70px 390px 181px 1fr;
}

.head-cell {
  padding-left: 4px;
  padding-top: 1px;
  border-left: 1px solid #e4e4e4;
  font-size: 14px;
  line-height: 28px;
  letter-spacing: .4px;
  color: #333;
}

.head-cell:first-child {
  border-left: 0;
}

.sort-mark {
  position: absolute;
  left: 110px;
  top: 1px;
}

.table-body {
  flex: 1;
}

.group-row {
  position: relative;
  height: 25px;
  margin-left: 20px;
  background: #eee;
  display: flex;
  align-items: center;
  font-size: 14px;
  letter-spacing: .35px;
  color: #333;
}

.chevron {
  position: absolute;
  left: -20px;
  width: 18px;
  display: flex;
  justify-content: center;
}

.group-icon {
  flex: none;
  width: 16px;
  margin-left: 3px;
}

.fx-serif {
  font: italic 15px/16px "Liberation Serif", serif;
  color: #777;
  text-align: center;
}

.group-name {
  margin-left: 7px;
}

.param-row {
  height: 21px;
  margin-left: 40px;
  display: grid;
  grid-template-columns: 190px 119px 70px 390px 181px 1fr;
  align-items: center;
  font-size: 11px;
  letter-spacing: .5px;
  color: #444;
}

.param-row:nth-child(odd) {
  background: #f3f3f3;
}

.param-row:nth-child(even) {
  background: #fff;
}

.param-kind {
  display: flex;
  align-items: center;
  gap: 7px;
  padding-left: 2px;
}

.param-name {
  padding-left: 3px;
}

.param-cell {
  padding-left: 4px;
}

.scrollbar {
  height: 16px;
  flex: none;
  background: #f0f0f0;
  border-top: 1px solid #fff;
  display: flex;
}

.scroll-arrow {
  width: 17px;
  display: flex;
  align-items: center;
  justify-content: center;
}

.scroll-thumb {
  width: 1100px;
  background: #c9c9c9;
}

.dialog-footer {
  flex: 1;
  padding: 18px 0 0 1091px;
}

.ok-btn {
  width: 86px;
  height: 24px;
  padding: 0;
  background: #e2e2e2;
  border: 1px solid #999;
  color: #333;
  font: 12px "Noto Sans", sans-serif;
}
</style>
